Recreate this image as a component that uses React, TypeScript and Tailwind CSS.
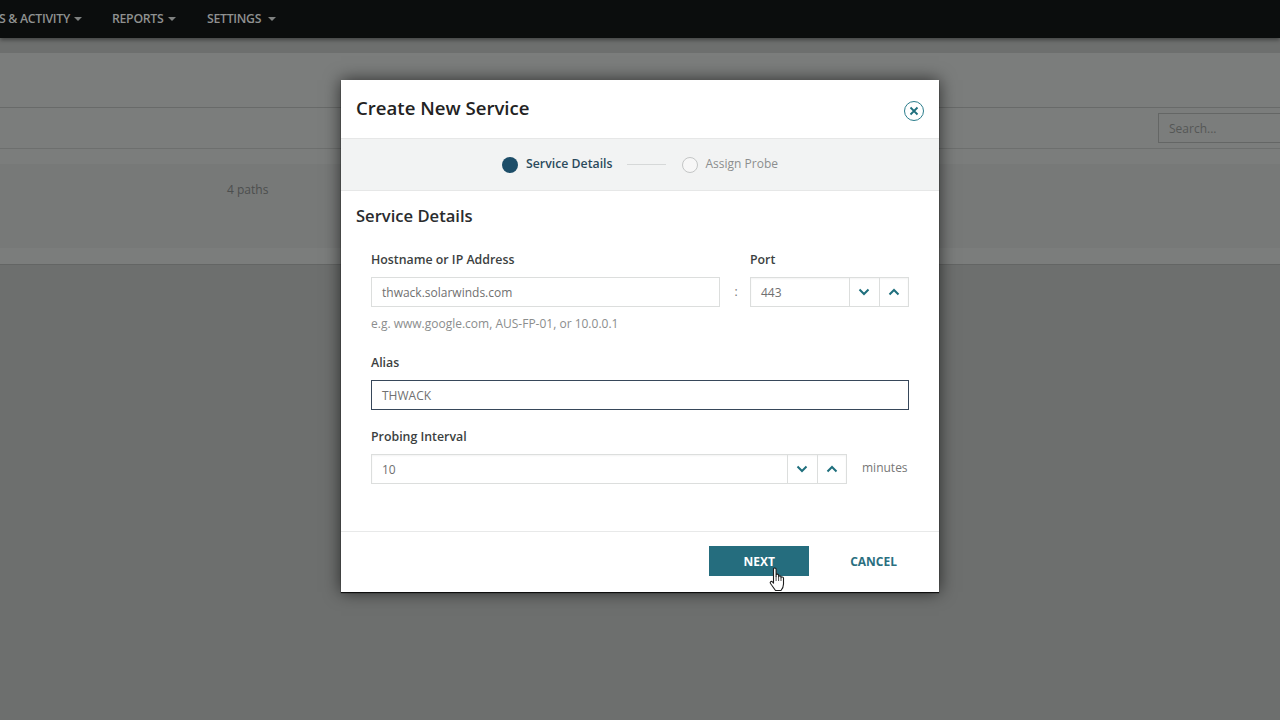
import React from "react";

const font = { fontFamily: '"Open Sans", "Liberation Sans", sans-serif' };

function Caret({ className = "ml-[5px]" }: { className?: string }) {
  return <span className={`inline-block h-0 w-0 border-x-[4px] border-t-[4px] border-x-transparent border-t-[#7f8180] ${className}`} />;
}

function Chevron({ up }: { up?: boolean }) {
  return (
    <svg width="12" height="8" viewBox="0 0 12 8" fill="none" stroke="#1f6f7d" strokeWidth="2" className="block">
      <path d={up ? "M1.5 6.5 6 2l4.5 4.5" : "M1.5 1.5 6 6l4.5-4.5"} />
    </svg>
  );
}

function Spinner({ value, className }: { value: string; className: string }) {
  return (
    <div className={`flex h-[30px] border border-[#dcdedd] text-[12px] text-[#707070] shadow-[inset_0_1px_2px_rgba(0,0,0,0.05)] ${className}`}>
      <div className="flex flex-1 items-center pl-[10px] pt-[1px]">{value}</div>
      <button className="flex w-[30px] items-center justify-center border-l border-[#dcdedd] pr-[1px]">
        <Chevron />
      </button>
      <button className="flex w-[29px] items-center justify-center border-l border-[#dcdedd]">
        <Chevron up />
      </button>
    </div>
  );
}

function Label({ children }: { children: React.ReactNode }) {
  return <div className="text-[12.35px] font-semibold leading-[18px] text-[#3c3f41]">{children}</div>;
}

export default function App() {
  return (
    <div style={font} className="relative h-[720px] w-[1280px] overflow-hidden bg-[#6d6f6e]">
      {/* page behind the dialog */}
      <nav className="flex h-[38px] items-center bg-[#0b0d0d] text-[12.3px] font-semibold tracking-[-0.3px] text-[#8f9190] shadow-[0_2px_4px_rgba(0,0,0,0.4)]">
        <span className="ml-[-1px] flex w-[113px] items-center">S &amp; ACTIVITY<Caret className="ml-[4px]" /></span>
        <span className="flex w-[95px] items-center">REPORTS<Caret /></span>
        <span className="flex items-center">SETTINGS<Caret className="ml-[7px]" /></span>
      </nav>
      <section className="mt-[15px] h-[212px] border-b border-[#636564] bg-[#7b7d7c]">
        <div className="h-[55px] border-b border-[#686a69]" />
        <div className="flex h-[41px] items-center justify-end border-b border-[#6d6f6e]">
          <div className="mr-[-20px] h-[30px] w-[142px] border border-[#646665] pl-[10px] pt-[1px] text-[12px] leading-[28px] text-[#555756]">Search...</div>
        </div>
        <div className="mt-[15px] h-[84px] bg-[#777978] pl-[227px] pt-[17px] text-[12px] leading-[18px] text-[#4c4e4e]">4 paths</div>
      </section>

      {/* dialog */}
      <div className="absolute inset-0 flex justify-center pt-[80px]">
        <div className="h-[512px] w-[598px] bg-white shadow-[0_1px_1px_rgba(0,0,0,0.8),0_0_16px_rgba(0,0,0,0.65)]">
          <header className="flex h-[59px] items-start justify-between border-b border-[#e6e7e7] pl-[15px] pr-[15px]">
            <h1 className="mt-[14px] text-[18.6px] font-semibold leading-[28px] text-[#222]">Create New Service</h1>
            <button className="mt-[21px] flex h-[20px] w-[20px] items-center justify-center rounded-full border border-[#2b7d8c]">
              <svg width="10" height="10" viewBox="0 0 10 10" stroke="#1f6f7d" strokeWidth="1.8">
                <path d="M1.500 1.500l7 7M8.500 1.500l-7 7" />
              </svg>
            </button>
          </header>

          <div className="flex h-[52px] items-center justify-center border-b border-[#e6e7e7] bg-[#f2f3f3] text-[12.3px]">
            <span className="h-[16px] w-[16px] rounded-full bg-[#1d4d68]" />
            <span className="ml-[8px] font-semibold text-[#2b4a5c]">Service Details</span>
            <span className="ml-[14px] mr-[16px] h-px w-[39px] bg-[#d6d8d8]" />
            <span className="h-[16px] w-[16px] rounded-full border border-[#c4c6c6] bg-[#f7f7f7]" />
            <span className="mb-[1px] ml-[8px] text-[12px] text-[#8c8e8e]">Assign Probe</span>
          </div>

          <main className="h-[341px] border-b border-[#e8e9e9] pl-[15px] pr-[30px] pt-[13px]">
            <h2 className="text-[16.6px] font-semibold leading-[24px] text-[#2a2c2e]">Service Details</h2>
            <div className="mt-[23px] pl-[15px]">
              <div className="flex">
                <div className="w-[349px]">
                  <Label>Hostname or IP Address</Label>
                  <div className="mt-[8px] flex h-[30px] items-center border border-[#dcdedd] pl-[10px] pt-[1px] text-[12px] text-[#707070]">thwack.solarwinds.com</div>
                  <div className="mt-[8px] text-[12px] leading-[18px] text-[#8b8d8d]">e.g. www.google.com, AUS-FP-01, or 10.0.0.1</div>
                </div>
                <div className="flex w-[30px] justify-center pl-[2px] pt-[32px] text-[12px] text-[#777]">:</div>
                <div className="w-[159px]">
                  <Label>Port</Label>
                  <Spinner value="443" className="mt-[8px] w-[159px]" />
                </div>
              </div>

              <div className="mt-[21px]">
                <Label>Alias</Label>
                <div className="mt-[8px] flex h-[30px] items-center border border-[#37475a] pl-[10px] pt-[1px] text-[12px] text-[#707070]">THWACK</div>
              </div>

              <div className="mt-[18px]">
                <Label>Probing Interval</Label>
                <div className="mt-[8px] flex items-center">
                  <Spinner value="10" className="w-[476px]" />
                  <span className="ml-[15px] pb-[2px] text-[12px] text-[#777]">minutes</span>
                </div>
              </div>
            </div>
          </main>

          <footer className="flex items-center justify-end pr-[42px] pt-[14px]">
            <button className="h-[30px] w-[100px] bg-[#256d7e] pt-[1px] text-[12px] font-bold text-white">NEXT</button>
            <button className="ml-[41px] pt-[1px] text-[12px] font-bold text-[#2a6f80]">CANCEL</button>
          </footer>
        </div>
      </div>

      {/* mouse pointer */}
      <svg className="absolute left-[769px] top-[567px]" width="18" height="25" viewBox="0 0 18 25">
        <path
          d="M4.500 2.200c0-1.600 2.600-1.600 2.600 0V9.500V8.200c0-1.400 2.500-1.400 2.500 0v1.600c0-1.300 2.400-1.300 2.400 0v1c0-1.200 2.500-1.200 2.500.2v6c0 3-1.200 5-2.500 6.500H6.500C5 21.500 3 18.500 1.500 16.500c-1-1.500.8-2.900 2-1.500l1 1.200z"
          fill="#fff"
          stroke="#1c1c1c"
          strokeWidth="1.100"
          strokeLinejoin="round"
        />
        <path d="M7.100 9.500v4.500M9.600 10v4M12 10.800v3.200" stroke="#1c1c1c" strokeWidth="0.800" fill="none" />
      </svg>
    </div>
  );
}
